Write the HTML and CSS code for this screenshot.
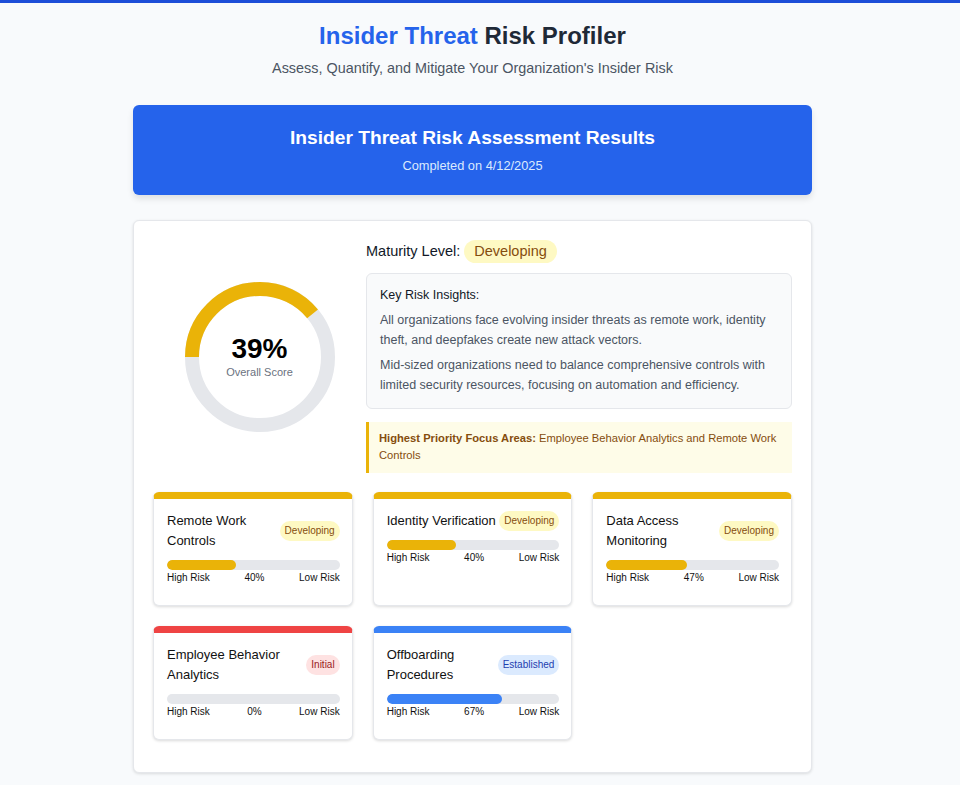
FILE: index.html
```html
<!DOCTYPE html>
<html lang="en">
<head>
    <meta charset="UTF-8">
    <meta name="viewport" content="width=device-width, initial-scale=1.0">
    <title>Insider Threat Risk Profiler</title>
    <link rel="stylesheet" href="styles.css">
</head>
<body>
    <header class="page-header">
        <h1><span class="accent">Insider Threat</span> Risk Profiler</h1>
        <p>Assess, Quantify, and Mitigate Your Organization's Insider Risk</p>
    </header>

    <main class="container">
        <section class="results-banner">
            <h2>Insider Threat Risk Assessment Results</h2>
            <p>Completed on 4/12/2025</p>
        </section>

        <section class="results-card">
            <div class="overview">
                <div class="score">
                    <div class="donut">
                        <svg width="150" height="150" viewBox="0 0 150 150">
                            <circle cx="75" cy="75" r="68" fill="none" stroke="#e5e7eb" stroke-width="14"/>
                            <!-- 39% of circumference (2*pi*68 = 427.26) -->
                            <circle cx="75" cy="75" r="68" fill="none" stroke="#eab308" stroke-width="14"
                                    stroke-dasharray="166.6 427.26" transform="rotate(180 75 75)"/>
                        </svg>
                        <div class="donut-label">
                            <strong>39%</strong>
                            <span>Overall Score</span>
                        </div>
                    </div>
                </div>

                <div class="summary">
                    <div class="maturity">
                        Maturity Level: <span class="badge badge-lg developing">Developing</span>
                    </div>
                    <div class="insights">
                        <h3>Key Risk Insights:</h3>
                        <p>All organizations face evolving insider threats as remote work, identity theft, and deepfakes create new attack vectors.</p>
                        <p>Mid-sized organizations need to balance comprehensive controls with limited security resources, focusing on automation and efficiency.</p>
                    </div>
                    <p class="focus"><strong>Highest Priority Focus Areas:</strong> Employee Behavior Analytics and Remote Work Controls</p>
                </div>
            </div>

            <div class="categories">
                <div class="category yellow">
                    <div class="category-head">
                        <h4>Remote Work Controls</h4>
                        <span class="badge developing">Developing</span>
                    </div>
                    <div class="bar"><div class="fill" style="width: 40%"></div></div>
                    <div class="bar-labels"><span>High Risk</span><span>40%</span><span>Low Risk</span></div>
                </div>

                <div class="category yellow">
                    <div class="category-head">
                        <h4>Identity Verification</h4>
                        <span class="badge developing">Developing</span>
                    </div>
                    <div class="bar"><div class="fill" style="width: 40%"></div></div>
                    <div class="bar-labels"><span>High Risk</span><span>40%</span><span>Low Risk</span></div>
                </div>

                <div class="category yellow">
                    <div class="category-head">
                        <h4>Data Access Monitoring</h4>
                        <span class="badge developing">Developing</span>
                    </div>
                    <div class="bar"><div class="fill" style="width: 47%"></div></div>
                    <div class="bar-labels"><span>High Risk</span><span>47%</span><span>Low Risk</span></div>
                </div>

                <div class="category red">
                    <div class="category-head">
                        <h4>Employee Behavior Analytics</h4>
                        <span class="badge initial">Initial</span>
                    </div>
                    <div class="bar"><div class="fill" style="width: 0%"></div></div>
                    <div class="bar-labels"><span>High Risk</span><span>0%</span><span>Low Risk</span></div>
                </div>

                <div class="category blue">
                    <div class="category-head">
                        <h4>Offboarding Procedures</h4>
                        <span class="badge established">Established</span>
                    </div>
                    <div class="bar"><div class="fill" style="width: 67%"></div></div>
                    <div class="bar-labels"><span>High Risk</span><span>67%</span><span>Low Risk</span></div>
                </div>
            </div>
        </section>
    </main>
</body>
</html>
```

FILE: styles.css
```css
body {
    font-family: "Liberation Sans", Arial, sans-serif;
    margin: 0;
    padding: 0 15px 40px 0;
    background-color: #f8fafc;
    border-top: 3px solid #1d4ed8;
    color: #111827;
}
.page-header {
    text-align: center;
    padding-top: 17px;
}
.page-header h1 {
    margin: 0;
    font-size: 24px;
    line-height: 32px;
    color: #1f2937;
}
.accent {
    color: #2563eb;
}
.page-header p {
    margin: 6px 0 0;
    font-size: 14.4px;
    line-height: 20px;
    color: #4b5563;
}
.container {
    max-width: 679px;
    margin: 27px auto 0;
}
.results-banner {
    background-color: #2563eb;
    color: white;
    text-align: center;
    border-radius: 6px;
    padding: 19px 20px 21px;
    box-shadow: 0 4px 6px rgba(0, 0, 0, 0.1);
}
.results-banner h2 {
    margin: 0 0 6px;
    font-size: 19.2px;
    line-height: 28px;
}
.results-banner p {
    margin: 0;
    font-size: 12.8px;
    line-height: 16px;
    color: #dbeafe;
}
.results-card {
    margin-top: 25px;
    background: white;
    border: 1px solid #e5e7eb;
    border-radius: 6px;
    box-shadow: 0 1px 3px rgba(0, 0, 0, 0.12);
    padding: 19px 19px 32px;
}
.overview {
    display: grid;
    grid-template-columns: 213px 1fr;
    align-items: center;
}
.score {
    display: flex;
    justify-content: center;
}
.donut {
    position: relative;
    width: 150px;
    height: 150px;
}
.donut svg {
    display: block;
}
.donut-label {
    position: absolute;
    inset: 0;
    display: flex;
    flex-direction: column;
    align-items: center;
    justify-content: center;
}
.donut-label strong {
    font-size: 28px;
    line-height: 32px;
    color: #000;
    margin-top: -2px;
}
.donut-label span {
    font-size: 11px;
    line-height: 14px;
    color: #6b7280;
}
.maturity {
    font-size: 14.5px;
    line-height: 23px;
    display: flex;
    align-items: center;
    gap: 4px;
}
.badge {
    display: inline-block;
    flex-shrink: 0;
    border-radius: 999px;
    font-size: 10px;
    line-height: 14px;
    padding: 3px 5px;
    white-space: nowrap;
}
.badge-lg {
    font-size: 14.5px;
    line-height: 19px;
    padding: 2px 10px;
}
.developing {
    background-color: #fef9c3;
    color: #854d0e;
}
.initial {
    background-color: #fee2e2;
    color: #991b1b;
}
.established {
    background-color: #dbeafe;
    color: #1e40af;
}
.insights {
    margin-top: 10px;
    background-color: #f9fafb;
    border: 1px solid #e5e7eb;
    border-radius: 6px;
    padding: 12px 13px 13px;
}
.insights h3 {
    margin: 0 0 6px;
    font-size: 12.5px;
    font-weight: normal;
    line-height: 19px;
    color: #111827;
}
.insights p {
    margin: 0;
    font-size: 12.5px;
    line-height: 19.5px;
    color: #4b5563;
}
.insights p + p {
    margin-top: 6px;
}
.focus {
    margin: 13px 0 0;
    background-color: #fefce8;
    border-left: 3px solid #eab308;
    padding: 8px 10px 9px;
    font-size: 11.2px;
    line-height: 17px;
    color: #854d0e;
}
.categories {
    margin-top: 19px;
    display: grid;
    grid-template-columns: repeat(3, 1fr);
    gap: 20px 20px;
}
.category {
    background: white;
    border: 1px solid #e5e7eb;
    border-top-width: 7px;
    border-radius: 6px;
    box-shadow: 0 1px 3px rgba(0, 0, 0, 0.15);
    padding: 12px 12px 20px 13px;
}
.category.yellow {
    border-top-color: #eab308;
}
.category.red {
    border-top-color: #ef4444;
}
.category.blue {
    border-top-color: #3b82f6;
}
.category-head {
    display: flex;
    justify-content: space-between;
    align-items: center;
    gap: 2px;
    margin-bottom: 9px;
}
.category-head h4 {
    margin: 0;
    font-size: 13px;
    font-weight: normal;
    line-height: 20px;
    color: #111;
}
.bar {
    height: 10px;
    background-color: #e5e7eb;
    border-radius: 999px;
    overflow: hidden;
}
.fill {
    height: 100%;
    border-radius: 999px;
}
.yellow .fill {
    background-color: #eab308;
}
.red .fill {
    background-color: #ef4444;
}
.blue .fill {
    background-color: #3b82f6;
}
.bar-labels {
    display: flex;
    justify-content: space-between;
    font-size: 10px;
    line-height: 14px;
    margin-top: 1px;
    color: #111;
}
```
